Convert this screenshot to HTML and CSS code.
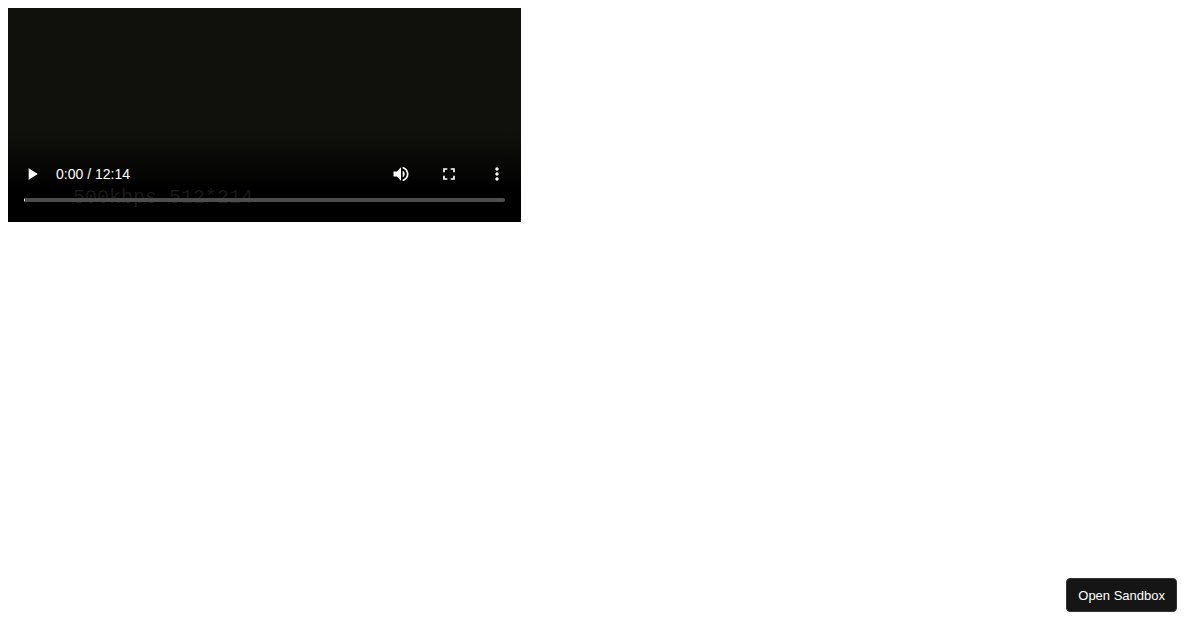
FILE: index.html
```
<!DOCTYPE html>
<html lang="en">

<head>
    <meta charset="utf-8">
    <meta name="viewport" content="width=device-width, initial-scale=1">
    <link rel="stylesheet" href="styles.css">
    <title>Video</title>
</head>

<body>
    <div class="player">
        <span class="caption">500kbps 512*214</span>
        <div class="controls">
            <div class="buttons">
                <button type="button" aria-label="Play">
                    <svg viewBox="0 0 24 24"><path d="M8 5v14l11-7z"/></svg>
                </button>
                <span class="time">0:00 / 12:14</span>
                <button type="button" aria-label="Mute">
                    <svg viewBox="0 0 24 24"><path d="M3 9v6h4l5 5V4L7 9H3zm13.5 3c0-1.77-1.02-3.29-2.5-4.03v8.05c1.48-.73 2.5-2.25 2.5-4.02zM14 3.23v2.06c2.89.86 5 3.54 5 6.71s-2.11 5.85-5 6.71v2.06c4.01-.91 7-4.49 7-8.77s-2.99-7.86-7-8.77z"/></svg>
                </button>
                <button type="button" aria-label="Full screen">
                    <svg viewBox="0 0 24 24"><path d="M7 14H5v5h5v-2H7v-3zm-2-4h2V7h3V5H5v5zm12 7h-3v2h5v-5h-2v3zM14 5v2h3v3h2V5h-5z"/></svg>
                </button>
                <button type="button" aria-label="More options">
                    <svg viewBox="0 0 24 24"><path d="M12 8c1.1 0 2-.9 2-2s-.9-2-2-2-2 .9-2 2 .9 2 2 2zm0 2c-1.1 0-2 .9-2 2s.9 2 2 2 2-.9 2-2-.9-2-2-2zm0 6c-1.1 0-2 .9-2 2s.9 2 2 2 2-.9 2-2-.9-2-2-2z"/></svg>
                </button>
            </div>
            <input class="seek" type="range" min="0" max="734" value="0" aria-label="Seek">
        </div>
    </div>

    <button class="sandbox" type="button">Open Sandbox</button>
</body>

</html>
```

FILE: styles.css
```
body {
    margin: 8px;
    background: #fff;
    font-family: "Liberation Sans", Arial, sans-serif;
}

button {
    border: 0;
    cursor: pointer;
}

.player {
    position: relative;
    display: flex;
    flex-direction: column;
    justify-content: flex-end;
    box-sizing: border-box;
    max-width: 513px;
    aspect-ratio: 513 / 214;
    background: linear-gradient(#10110c 58%, #0a0a08 68%, #060605 76%, #000 84%);
}

/* lies under the controls */
.caption {
    position: absolute;
    left: 65px;
    bottom: 12px;
    color: #181818;
    font-family: "Liberation Mono", "Courier New", monospace;
    font-size: 20px;
    line-height: 24px;
}

.controls {
    position: relative;
    padding-bottom: 20px;
}

.buttons {
    display: flex;
    align-items: center;
}

.buttons button {
    display: flex;
    align-items: center;
    justify-content: center;
    width: 48px;
    height: 48px;
    padding: 0;
    background: none;
}

.buttons svg {
    width: 20px;
    height: 20px;
    fill: #fff;
}

.time {
    margin-right: auto;
    color: #fff;
    font-size: 14px;
}

.seek {
    display: block;
    box-sizing: border-box;
    width: calc(100% - 32px);
    height: 4px;
    margin: 0 16px;
    appearance: none;
    border-radius: 2px;
    background: #4d4d4d;
    overflow: hidden;
}

.seek::-webkit-slider-thumb {
    appearance: none;
    width: 1px;
    height: 4px;
    background: #fff;
}

.sandbox {
    position: fixed;
    right: 23px;
    bottom: 18px;
    height: 34px;
    padding: 0 11px;
    border: 1px solid #343434;
    border-radius: 4px;
    background: #151515;
    color: #fff;
    font-family: "Liberation Sans", Arial, sans-serif;
    font-size: 13px;
}
```
